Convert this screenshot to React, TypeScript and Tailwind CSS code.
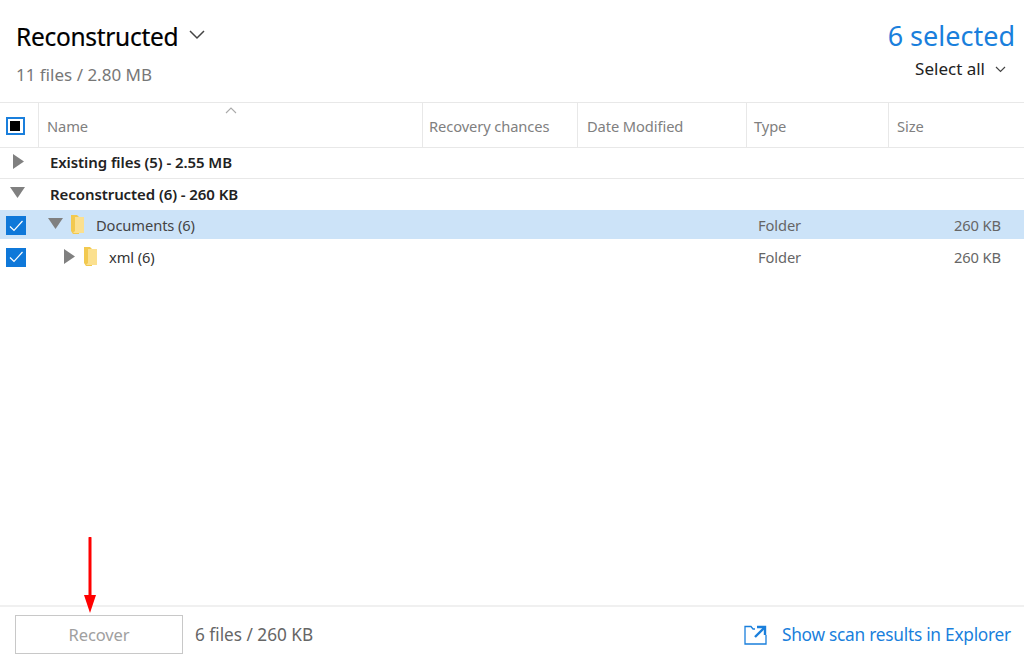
import React from "react";

function Check() {
  return (
    <span className="flex h-[19px] w-[20px] items-center justify-center bg-[#0f78d9]">
      <svg width="16" height="14" viewBox="0 0 16 14" fill="none" stroke="#fff" strokeWidth="1.2">
        <path d="M2 7.5 L6 11.5 L14.5 2" />
      </svg>
    </span>
  );
}

function Tri({ dir }: { dir: "right" | "down" }) {
  return dir === "right" ? (
    <svg width="11" height="15" viewBox="0 0 11 15" fill="#808080"><path d="M0 0 L11 7.5 L0 15 Z" /></svg>
  ) : (
    <svg width="15" height="11" viewBox="0 0 15 11" fill="#808080"><path d="M0 0 L15 0 L7.5 11 Z" /></svg>
  );
}

function Folder() {
  return (
    <svg width="15" height="21" viewBox="0 0 15 21">
      <path d="M1 1 H7 L9 3 V20 L3 20 L1 17 Z" fill="#f2c94f" />
      <path d="M5 3 H14 V19 H3 L5 17 Z" fill="#fbe08f" />
    </svg>
  );
}

function Col({ w, label, cls = "" }: { w: string; label: string; cls?: string }) {
  return <div className={`flex h-full items-center border-l border-[#e8e8e8] pt-[2px] ${w} ${cls}`}>{label}</div>;
}

export default function App() {
  return (
    <div className="relative flex h-[662px] w-[1024px] flex-col overflow-hidden bg-white font-['Noto_Sans',sans-serif] text-[#333]">
      <header className="flex h-[102px] shrink-0 justify-between pl-[16px] pr-[9px]">
        <div>
          <div className="mt-[21px] flex items-center gap-[11px]">
            <span className="text-[24.5px] leading-[32px] tracking-[-0.3px] text-black [-webkit-text-stroke:0.2px_black]">Reconstructed</span>
            <svg width="16" height="10" viewBox="0 0 16 10" fill="none" stroke="#444" strokeWidth="1.5" className="mb-[5px]"><path d="M1 1 L8 8 L15 1" /></svg>
          </div>
          <div className="mt-[11px] text-[17px] leading-[22px] text-[#777]">11 files / 2.80 MB</div>
        </div>
        <div className="flex flex-col items-end">
          <div className="mt-[18px] text-[27px] leading-[36px] text-[#1a7fdc]">6 selected</div>
          <div className="mt-[4px] flex items-center gap-[10px] pr-[9px] text-[17px] leading-[22px] text-[#222]">
            <span>Select all</span>
            <svg width="11" height="7" viewBox="0 0 11 7" fill="none" stroke="#444" strokeWidth="1.2"><path d="M1 1 L5.5 5.5 L10 1" /></svg>
          </div>
        </div>
      </header>

      <div className="relative flex h-[46px] shrink-0 items-center border-y border-[#e8e8e8] text-[14.7px] tracking-[-0.1px] text-[#808080]">
        <div className="flex h-full w-[38px] shrink-0 items-center justify-center pr-[8px] pt-[2px]">
          <span className="flex h-[18px] w-[19px] items-center justify-center border-2 border-[#1a7fdc] bg-white">
            <span className="h-[10px] w-[10px] bg-black" />
          </span>
        </div>
        <Col w="w-[384px]" label="Name" cls="pl-[8px]" />
        <Col w="w-[155px]" label="Recovery chances" cls="pl-[6px]" />
        <Col w="w-[169px]" label="Date Modified" cls="pl-[9px]" />
        <Col w="w-[142px]" label="Type" cls="pl-[7px]" />
        <Col w="w-[136px]" label="Size" cls="pl-[8px]" />
        <svg width="12" height="7" viewBox="0 0 12 7" fill="none" stroke="#aaa" strokeWidth="1.1" className="absolute left-[225px] top-[4px]"><path d="M1 6 L6 1 L11 6" /></svg>
      </div>

      <div className="flex h-[31px] shrink-0 items-center border-b border-[#e8e8e8] pb-[2px] text-[15px] font-semibold tracking-[-0.08px] text-[#222]">
        <span className="ml-[13px] mb-[1px] flex w-[37px]"><Tri dir="right" /></span>
        <span>Existing files (5) - 2.55 MB</span>
      </div>
      <div className="flex h-[31px] shrink-0 items-center pb-[1px] text-[15px] font-semibold tracking-[-0.08px] text-[#222]">
        <span className="ml-[10px] mb-[3px] flex w-[40px]"><Tri dir="down" /></span>
        <span>Reconstructed (6) - 260 KB</span>
      </div>
      <div className="flex h-[29px] shrink-0 items-center bg-[#cce3f8] pt-[2px] text-[14.7px] tracking-[-0.1px] text-[#444]">
        <span className="ml-[6px] flex w-[42px]"><Check /></span>
        <span className="mb-[4px] flex w-[22px]"><Tri dir="down" /></span>
        <span className="mb-[2px] mr-[11px]"><Folder /></span>
        <span className="w-[662px]">Documents (6)</span>
        <span className="w-[195px] text-[#666]">Folder</span>
        <span className="w-[48px] text-right text-[#666]">260 KB</span>
      </div>
      <div className="mt-[2px] flex h-[31px] shrink-0 items-center pt-[1px] text-[14.7px] tracking-[-0.1px] text-[#333]">
        <span className="ml-[6px] flex w-[58px]"><Check /></span>
        <span className="mb-[1px] flex w-[19px]"><Tri dir="right" /></span>
        <span className="mb-[1px] mr-[10px]"><Folder /></span>
        <span className="w-[649px] pl-[1px]">xml (6)</span>
        <span className="w-[196px] pl-[1px] text-[#666]">Folder</span>
        <span className="w-[48px] text-right text-[#666]">260 KB</span>
      </div>

      <div className="flex-1" />

      <footer className="flex h-[57px] shrink-0 items-center border-t-2 border-[#f0f0f0] pl-[15px] pr-[13px]">
        <button className="h-[39px] w-[168px] border border-[#c8c8c8] pt-[2px] text-[16.5px] tracking-[-0.1px] text-[#a0a0a0]">Recover</button>
        <span className="ml-[12px] text-[17.2px] text-[#666]">6 files / 260 KB</span>
        <div className="ml-auto flex items-center gap-[15px]">
          <svg width="23" height="20" viewBox="0 0 23 20" fill="none" stroke="#1a7fdc" strokeWidth="1.3">
            <path d="M1 6 V1.5 H7 L9 4 H11 M1 4.5 V19 H22 V10" />
            <path d="M11 12 L20 3" strokeWidth="2.4" />
            <path d="M13 2 H21 V10" strokeWidth="2.4" />
          </svg>
          <span className="text-[17.3px] tracking-[-0.25px] text-[#1a7fdc]">Show scan results in Explorer</span>
        </div>
      </footer>

      <svg width="14" height="76" viewBox="0 0 14 76" className="absolute left-[83px] top-[537px]">
        <path d="M7 1 V58" stroke="#f00" strokeWidth="3" strokeLinecap="round" />
        <path d="M1 58 H13 L7 76 Z" fill="#f00" />
      </svg>
    </div>
  );
}
